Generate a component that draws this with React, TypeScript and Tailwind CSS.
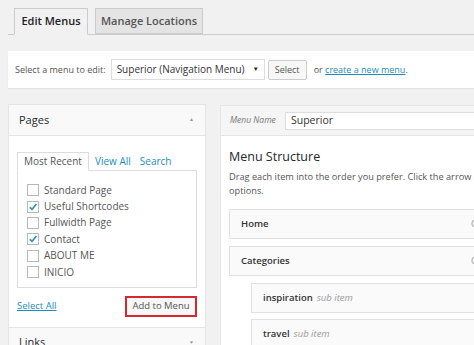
import React from "react";

const pages = [
  { label: "Standard Page", checked: false },
  { label: "Useful Shortcodes", checked: true },
  { label: "Fullwidth Page", checked: false },
  { label: "Contact", checked: true },
  { label: "ABOUT ME", checked: false },
  { label: "INICIO", checked: false },
];

function Checkbox({ checked }: { checked: boolean }) {
  return (
    <span className="w-[12px] h-[12px] border border-[#b4b9be] bg-white flex items-center justify-center shrink-0">
      {checked && (
        <svg width="10" height="10" viewBox="0 0 10 10">
          <path d="M1.8 5.2 L4 7.4 L8.4 2" fill="none" stroke="#1e8cbe" strokeWidth="1.6" />
        </svg>
      )}
    </span>
  );
}

function MenuItem({ title, sub, type }: { title: string; sub?: boolean; type?: string }) {
  return (
    <div className="h-[30px] border border-[#e1e1e1] bg-[#fafafa] flex items-center pl-[11px]">
      <span className="w-[230px] shrink-0 text-[9.5px] font-semibold text-[#333]">
        {title}
        {sub && <span className="ml-[4px] italic font-normal text-[#999]">sub item</span>}
      </span>
      {type && <span className="text-[9px] text-[#999]">{type}</span>}
    </div>
  );
}

export default function App() {
  return (
    <div
      className="w-[474px] h-[345px] overflow-hidden bg-[#f1f1f1] text-[#444]"
      style={{ fontFamily: '"Open Sans", "Noto Sans", sans-serif' }}
    >
      {/* Tabs */}
      <div className="ml-[8px] pl-[6px] pt-[8px] flex border-b border-[#ccc]">
        <div className="w-[74px] h-[27px] -mb-px border border-[#ccc] border-b-[#f1f1f1] bg-[#f1f1f1] flex items-center justify-center text-[11px] font-semibold text-[#222]">
          Edit Menus
        </div>
        <div className="ml-[7px] w-[108px] h-[26px] border border-[#ccc] bg-[#e4e4e4] flex items-center justify-center text-[11px] font-semibold text-[#555]">
          Manage Locations
        </div>
      </div>

      {/* Select bar */}
      <div className="mt-[16px] ml-[8px] h-[37px] bg-white shadow-[0_1px_1px_rgba(0,0,0,0.05)] flex items-center pl-[7px]">
        <span className="text-[9px] text-[#555]">Select a menu to edit:</span>
        <div className="ml-[5px] w-[154px] h-[21px] border border-[#ddd] bg-white flex items-center pl-[5px] pr-[5px]">
          <span className="text-[10px] text-[#333] flex-1">Superior (Navigation Menu)</span>
          <span className="text-[6px] text-[#222]">▼</span>
        </div>
        <div className="ml-[3px] w-[39px] h-[20px] border border-[#ccc] bg-[#f7f7f7] rounded-[2px] flex items-center justify-center text-[9px] text-[#555]">
          Select
        </div>
        <span className="ml-[7px] text-[9px] text-[#555]">
          or <span className="text-[#1e8cbe] underline">create a new menu</span>.
        </span>
      </div>

      {/* Columns */}
      <div className="mt-[16px] flex items-start">
        {/* Left column */}
        <div className="ml-[8px] w-[198px] shrink-0 border border-[#e5e5e5] bg-white">
          <div className="h-[31px] bg-[#f9f9f9] border-b border-[#e5e5e5] flex items-center justify-between px-[10px]">
            <span className="text-[11px] text-[#23282d]">Pages</span>
            <span className="text-[5px] text-[#999] mr-[1px]">▲</span>
          </div>
          <div className="pt-[16px] px-[8px] pb-[10px]">
            <div className="flex items-end h-[18px]">
              <div className="h-[19px] -mb-px w-[72px] border border-[#ddd] border-b-white bg-white flex items-center justify-center text-[10px] text-[#555] relative z-10">
                Most Recent
              </div>
              <span className="ml-[6px] text-[10px] text-[#1e8cbe] leading-[18px]">View All</span>
              <span className="ml-[9px] text-[10px] text-[#1e8cbe] leading-[18px]">Search</span>
            </div>
            <div className="h-[118px] border border-[#ddd] bg-white pt-[11px] pl-[9px] flex flex-col">
              {pages.map((p) => (
                <div key={p.label} className="h-[16.4px] flex items-center gap-[5px]">
                  <Checkbox checked={p.checked} />
                  <span className="text-[10px] text-[#555]">{p.label}</span>
                </div>
              ))}
            </div>
            <div className="mt-[8px] flex items-center justify-between">
              <span className="text-[9.5px] text-[#1e8cbe] underline">Select All</span>
              <div className="w-[72px] h-[21px] border-2 border-[#d7272f] bg-[#f7f7f7] flex items-center justify-center text-[9.5px] text-[#555]">
                Add to Menu
              </div>
            </div>
          </div>
          <div className="h-[30px] border-t border-[#e5e5e5] bg-[#f9f9f9] flex items-center justify-between px-[10px]">
            <span className="text-[11px] text-[#23282d]">Links</span>
            <span className="text-[5px] text-[#999] mr-[1px]">▼</span>
          </div>
        </div>

        {/* Right column */}
        <div className="ml-[14px] mt-[1px] w-[400px] shrink-0 border border-[#e5e5e5] bg-white">
          <div className="h-[30px] bg-[#f5f5f5] border-b border-[#e5e5e5] flex items-center pl-[9px]">
            <span className="text-[8.5px] italic text-[#777] w-[55px]">Menu Name</span>
            <div className="flex-1 h-[18px] border border-[#ddd] bg-white flex items-center pl-[5px] text-[10.5px] text-[#333]">
              Superior
            </div>
          </div>
          <div className="pl-[8px] pt-[12px]">
            <div className="text-[12.5px] leading-[17px] text-[#23282d]">Menu Structure</div>
            <div className="mt-[5px] text-[9.2px] leading-[14px] text-[#555] whitespace-nowrap">
              Drag each item into the order you prefer. Click the arrow on the right of the item to reveal additional configuration
              <br />
              options.
            </div>
            <div className="mt-[11px] flex flex-col gap-[7px]">
              <MenuItem title="Home" type="Custom Link" />
              <MenuItem title="Categories" type="Custom Link" />
              <div className="ml-[22px] flex flex-col gap-[6px]">
                <MenuItem title="inspiration" sub />
                <MenuItem title="travel" sub />
              </div>
            </div>
          </div>
        </div>
      </div>
    </div>
  );
}
